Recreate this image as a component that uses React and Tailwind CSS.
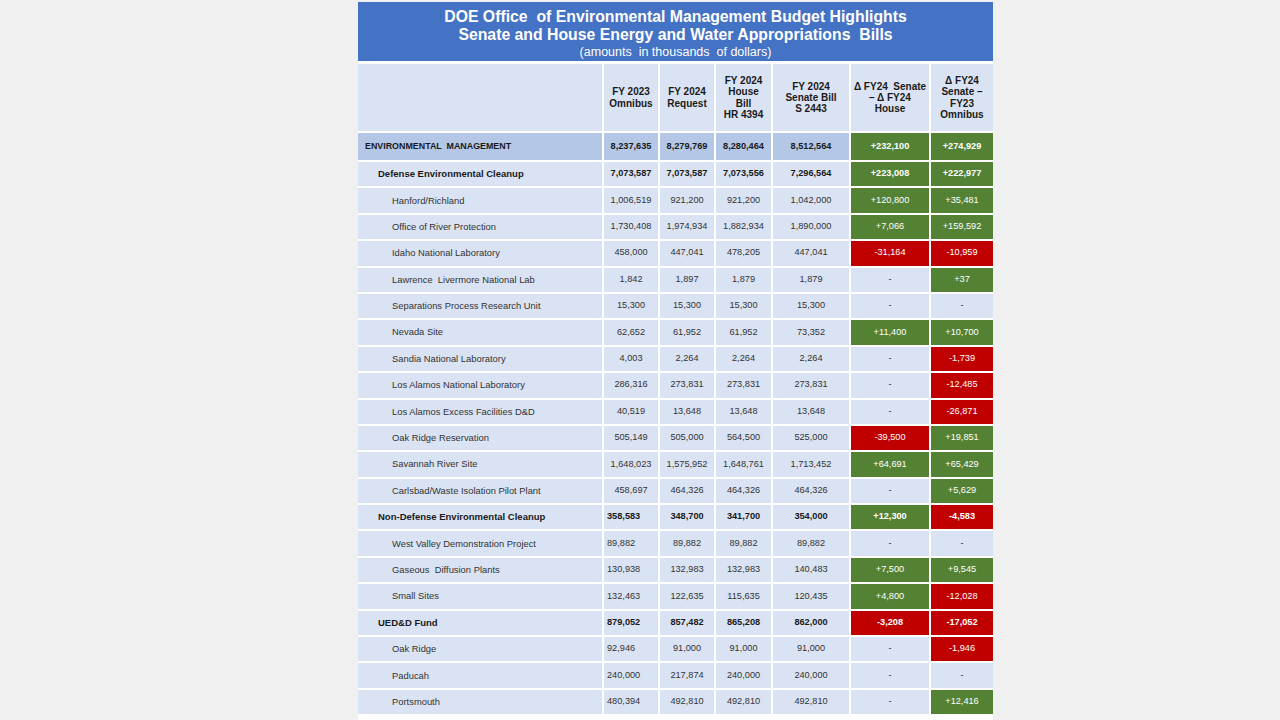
import React from "react";

const rows = [
  ["ENVIRONMENTAL  MANAGEMENT", "8,237,635", "8,279,769", "8,280,464", "8,512,564", "+232,100", "+274,929", 0],
  ["Defense Environmental Cleanup", "7,073,587", "7,073,587", "7,073,556", "7,296,564", "+223,008", "+222,977", 1],
  ["Hanford/Richland", "1,006,519", "921,200", "921,200", "1,042,000", "+120,800", "+35,481", 2],
  ["Office of River Protection", "1,730,408", "1,974,934", "1,882,934", "1,890,000", "+7,066", "+159,592", 2],
  ["Idaho National Laboratory", "458,000", "447,041", "478,205", "447,041", "-31,164", "-10,959", 2],
  ["Lawrence  Livermore National Lab", "1,842", "1,897", "1,879", "1,879", "-", "+37", 2],
  ["Separations Process Research Unit", "15,300", "15,300", "15,300", "15,300", "-", "-", 2],
  ["Nevada Site", "62,652", "61,952", "61,952", "73,352", "+11,400", "+10,700", 2],
  ["Sandia National Laboratory", "4,003", "2,264", "2,264", "2,264", "-", "-1,739", 2],
  ["Los Alamos National Laboratory", "286,316", "273,831", "273,831", "273,831", "-", "-12,485", 2],
  ["Los Alamos Excess Facilities D&D", "40,519", "13,648", "13,648", "13,648", "-", "-26,871", 2],
  ["Oak Ridge Reservation", "505,149", "505,000", "564,500", "525,000", "-39,500", "+19,851", 2],
  ["Savannah River Site", "1,648,023", "1,575,952", "1,648,761", "1,713,452", "+64,691", "+65,429", 2],
  ["Carlsbad/Waste Isolation Pilot Plant", "458,697", "464,326", "464,326", "464,326", "-", "+5,629", 2],
  ["Non-Defense Environmental Cleanup", "358,583", "348,700", "341,700", "354,000", "+12,300", "-4,583", 1],
  ["West Valley Demonstration Project", "89,882", "89,882", "89,882", "89,882", "-", "-", 2],
  ["Gaseous  Diffusion Plants", "130,938", "132,983", "132,983", "140,483", "+7,500", "+9,545", 2],
  ["Small Sites", "132,463", "122,635", "115,635", "120,435", "+4,800", "-12,028", 2],
  ["UED&D Fund", "879,052", "857,482", "865,208", "862,000", "-3,208", "-17,052", 1],
  ["Oak Ridge", "92,946", "91,000", "91,000", "91,000", "-", "-1,946", 2],
  ["Paducah", "240,000", "217,874", "240,000", "240,000", "-", "-", 2],
  ["Portsmouth", "480,394", "492,810", "492,810", "492,810", "-", "+12,416", 2],
];

const headers = [
  ["FY 2023", "Omnibus"],
  ["FY 2024", "Request"],
  ["FY 2024", "House", "Bill", "HR 4394"],
  ["FY 2024", "Senate Bill", "S 2443"],
  ["\u0394 FY24  Senate", "\u2013 \u0394 FY24", "House"],
  ["\u0394 FY24", "Senate \u2013", "FY23", "Omnibus"],
];

function deltaClass(v) {
  if (v.startsWith("+")) return "bg-[#548235] text-white";
  if (v.startsWith("-") && v.length > 1) return "bg-[#c00000] text-white";
  return "bg-[#dae3f3] text-[#333333]";
}

export default function App() {
  return (
    <div
      className="w-[1280px] h-[720px] bg-[#f0f0f0] overflow-hidden flex"
      style={{ fontFamily: "'Liberation Sans', Arial, sans-serif" }}
    >
      <div className="ml-[358px] mt-[2px] w-[635px] bg-white flex flex-col">
        <div className="h-[59px] pt-[6px] bg-[#4472c4] flex flex-col items-center justify-start text-white">
          <div className="text-[15.8px] font-bold leading-[18px] whitespace-pre">DOE Office  of Environmental Management Budget Highlights</div>
          <div className="text-[15.8px] font-bold leading-[18px] whitespace-pre">Senate and House Energy and Water Appropriations  Bills</div>
          <div className="mt-[1px] text-[12.5px] leading-[14px] whitespace-pre">(amounts  in thousands  of dollars)</div>
        </div>
        <div className="mt-[3px] grid grid-cols-[244px_54px_54px_55px_76px_78px_62px] gap-[2px]">
          <div className="h-[67px] bg-[#dae3f3]" />
          {headers.map((h, i) => (
            <div
              key={i}
              className="h-[67px] bg-[#dae3f3] flex flex-col items-center justify-center text-center font-bold text-[10px] leading-[11.3px] text-[#1a1a1a] whitespace-pre"
            >
              {h.map((l, j) => (
                <div key={j}>{l}</div>
              ))}
            </div>
          ))}
          {rows.map((r, ri) => {
            const level = r[7];
            const h = ri === 0 ? "h-[27px]" : "h-[24.4px]";
            const base = level === 0 ? "bg-[#b4c7e7]" : "bg-[#dae3f3]";
            const bold = level < 2;
            const labelCls =
              level === 0
                ? "pl-[7px] text-[8.9px] font-bold text-[#1a1a1a]"
                : level === 1
                ? "pl-[20px] text-[9.5px] font-bold text-[#1a1a1a]"
                : "pl-[34px] text-[9.4px] text-[#333333]";
            return (
              <React.Fragment key={ri}>
                <div className={`${h} ${base} flex items-center whitespace-pre ${labelCls}`}>{r[0]}</div>
                {[1, 2, 3, 4].map((c) => (
                  <div
                    key={c}
                    className={`${h} ${base} flex items-center text-[9.2px] ${
                      bold ? "font-bold text-[#1a1a1a]" : "text-[#333333]"
                    } ${c === 1 && ri >= 14 ? "justify-start pl-[3px]" : "justify-center"}`}
                  >
                    {r[c]}
                  </div>
                ))}
                {[5, 6].map((c) => (
                  <div
                    key={c}
                    className={`${h} flex items-center justify-center text-[9.2px] ${bold ? "font-bold" : ""} ${deltaClass(r[c])}`}
                  >
                    {r[c]}
                  </div>
                ))}
              </React.Fragment>
            );
          })}
        </div>
      </div>
    </div>
  );
}
